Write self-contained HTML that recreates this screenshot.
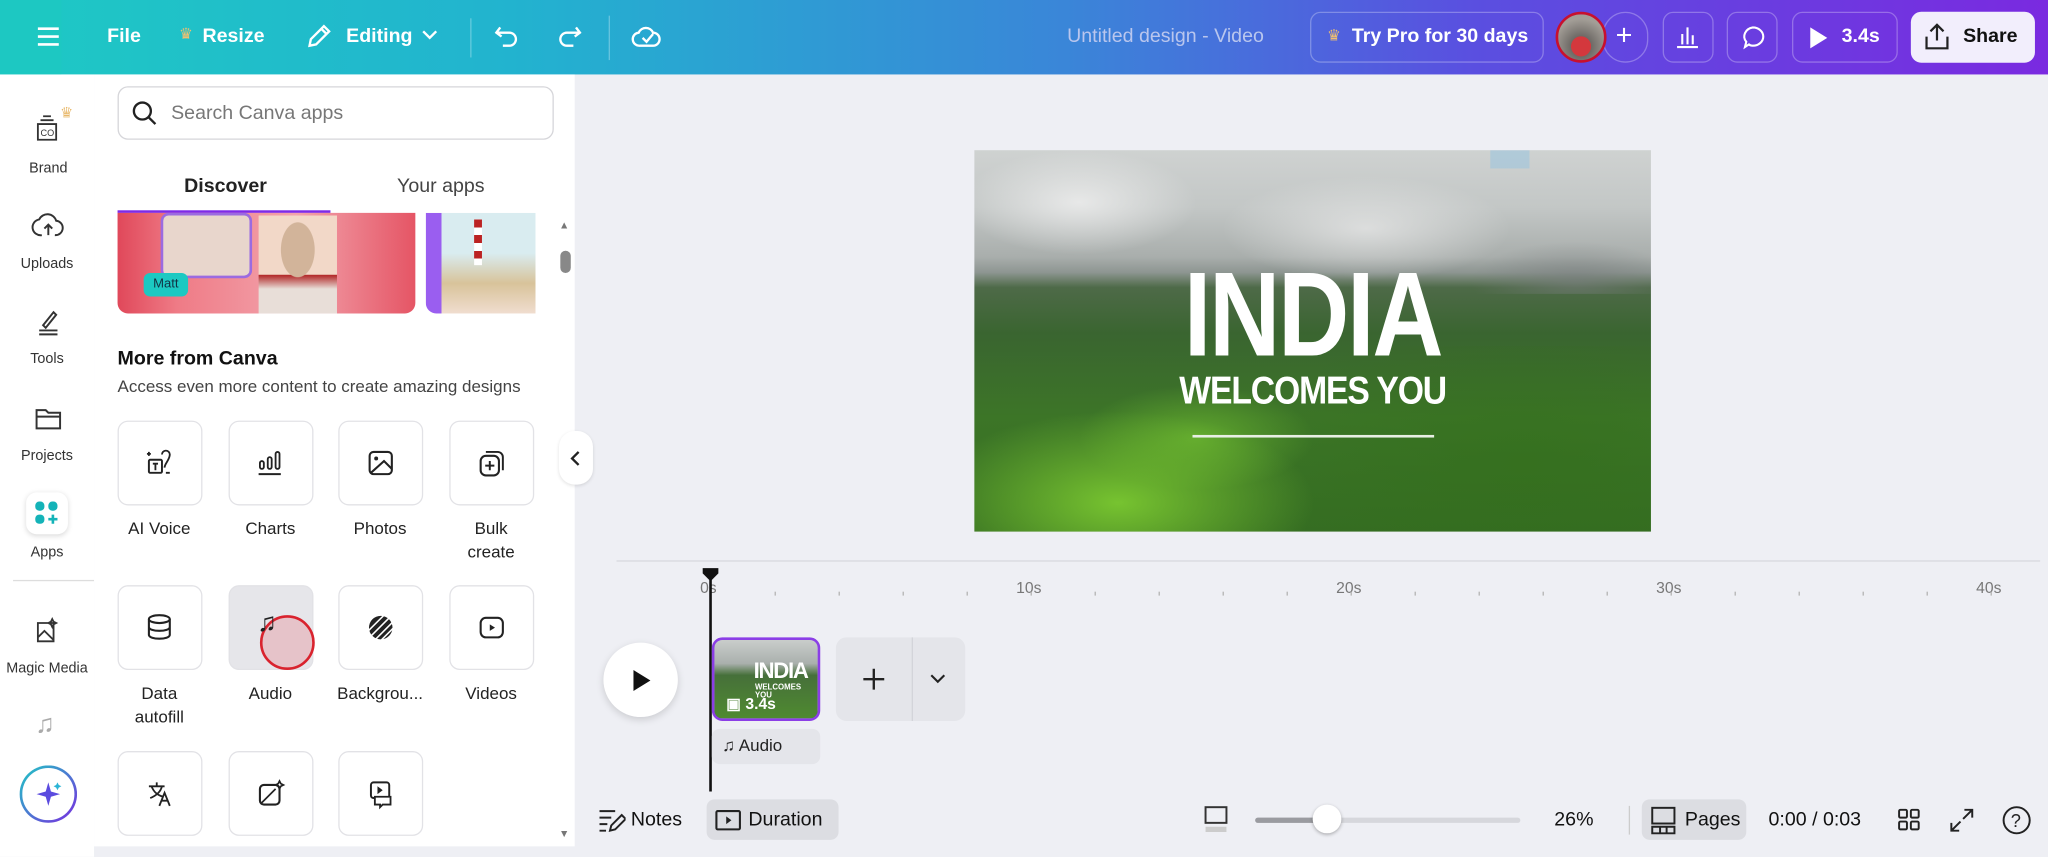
<!DOCTYPE html>
<html><head><meta charset="utf-8">
<style>
*{box-sizing:border-box;margin:0;padding:0}
html,body{width:2048px;height:857px;overflow:hidden;background:#eeeff4;font-family:"Liberation Sans",sans-serif}
#w{position:absolute;left:0;top:0;width:1568px;height:656px;transform:scale(1.306122);transform-origin:0 0;background:#eeeff4}
.a{position:absolute}
.top{left:0;top:0;width:1568px;height:57px;background:linear-gradient(90deg,#1ec9c4 0%,#22b3cf 25%,#3a86d8 52%,#5a4fe0 72%,#7a2ae0 100%)}
.wt{color:#fff;font-weight:bold;font-size:15px}
.btn{border:1px solid rgba(255,255,255,.28);border-radius:8px;height:39px;top:9px}
.rail{left:0;top:57px;width:72px;height:599px;background:#fff}
.rl{width:72px;text-align:center;font-size:11px;color:#333}
.panel{left:72px;top:57px;width:368px;height:591px;background:#fff}
.tile{width:65px;height:65px;border:1px solid #e2e2e6;border-radius:8px;background:#fff}
.tl{width:80px;text-align:center;font-size:13px;color:#222;line-height:18px}
svg{display:block}
.ru{font-size:12px;color:#777;top:443px}
</style></head><body><div id="w">
<div class="a top"></div>
<div class="a" style="left:0;top:0;width:47px;height:57px;background:#1dc8c2"></div>
<svg class="a" style="left:27px;top:19px" width="20" height="18"><path d="M2 3h16M2 9h16M2 15h16" stroke="#fff" stroke-width="2"/></svg>
<div class="a wt" style="left:82px;top:19px">File</div>
<div class="a" style="left:137px;top:19px;color:#f0c070;font-size:12px">♛</div>
<div class="a wt" style="left:155px;top:19px">Resize</div>
<svg class="a" style="left:233px;top:17px" width="22" height="22"><path d="M4 18l1-5L15 3l4 4L9 17z M13 5l4 4" stroke="#fff" stroke-width="1.8" fill="none"/></svg>
<div class="a wt" style="left:265px;top:19px">Editing</div>
<svg class="a" style="left:322px;top:22px" width="14" height="10"><path d="M2 2l5 5 5-5" stroke="#fff" stroke-width="1.8" fill="none"/></svg>
<div class="a" style="left:360px;top:14px;width:1px;height:30px;background:rgba(255,255,255,.3)"></div>
<svg class="a" style="left:377px;top:17px" width="22" height="22"><path d="M6 4L3 8l4 3M3 8h10a5 5 0 010 10H8" stroke="#fff" stroke-width="1.8" fill="none"/></svg>
<svg class="a" style="left:425px;top:17px" width="22" height="22"><path d="M16 4l3 4-4 3M19 8H9a5 5 0 000 10h5" stroke="#fff" stroke-width="1.8" fill="none"/></svg>
<div class="a" style="left:466px;top:12px;width:1px;height:34px;background:rgba(255,255,255,.3)"></div>
<svg class="a" style="left:483px;top:16px" width="24" height="24"><path d="M7 19a5 5 0 01-1-10 6 6 0 0111 0 4 4 0 010 10z M9 13l3 3 5-6" stroke="#fff" stroke-width="1.8" fill="none"/></svg>
<div class="a" style="left:817px;top:19px;color:#b9c6ee;font-size:15px">Untitled design - Video</div>
<div class="a btn" style="left:1003px;width:179px"></div>
<div class="a" style="left:1016px;top:20px;color:#f0c070;font-size:12px">♛</div>
<div class="a wt" style="left:1035px;top:19px">Try Pro for 30 days</div>
<div class="a btn" style="left:1227px;width:35px;border-radius:20px"></div>
<div class="a" style="left:1237px;top:15px;color:#fff;font-size:22px;line-height:24px">+</div>
<div class="a" style="left:1191px;top:9px;width:39px;height:39px;border-radius:50%;border:2px solid #c8102e;background:radial-gradient(circle at 50% 70%,#d4383d 0 25%,#6e6a66 26%,#a39e97 70%)"></div>
<div class="a btn" style="left:1273px;width:39px"></div>
<svg class="a" style="left:1282px;top:18px" width="20" height="20"><path d="M2 18h16M6 16V8M10 16V3M14 16V9" stroke="#fff" stroke-width="1.6"/></svg>
<div class="a btn" style="left:1322px;width:39px"></div>
<svg class="a" style="left:1331px;top:18px" width="22" height="22"><path d="M11 3a8 7 0 110 14c-1 0-2 0-3-1l-3 2 1-4a8 7 0 015-11z" stroke="#fff" stroke-width="1.6" fill="none"/></svg>
<div class="a btn" style="left:1372px;width:81px"></div>
<svg class="a" style="left:1383px;top:19px" width="18" height="20"><path d="M3 2l13 8-13 8z" fill="#fff"/></svg>
<div class="a wt" style="left:1410px;top:19px">3.4s</div>
<div class="a" style="left:1463px;top:9px;width:95px;height:39px;border-radius:8px;background:#f2eefc"></div>
<svg class="a" style="left:1472px;top:17px" width="22" height="22"><path d="M11 14V2M6 7l5-5 5 5M3 11v9h16v-9" stroke="#222" stroke-width="1.7" fill="none"/></svg>
<div class="a" style="left:1503px;top:19px;font-size:15px;font-weight:bold;color:#111">Share</div>

<div class="a rail"></div>
<svg class="a" style="left:24px;top:86px" width="26" height="26"><path d="M5 9h14v12H5z M7 6h10M9 3h6" stroke="#333" stroke-width="1.4" fill="none"/><text x="7" y="18" font-size="7" font-family="Liberation Sans" fill="#333">CO</text></svg>
<div class="a" style="left:46px;top:80px;color:#e8b86a;font-size:11px">♛</div>
<div class="a rl" style="left:1px;top:123px">Brand</div>
<svg class="a" style="left:24px;top:161px" width="26" height="24"><path d="M8 19a6 6 0 01-2-12 7 7 0 0113 1 5 5 0 01-1 11 M13 19v-8M10 14l3-3 3 3" stroke="#333" stroke-width="1.5" fill="none"/></svg>
<div class="a rl" style="top:196px">Uploads</div>
<svg class="a" style="left:25px;top:235px" width="24" height="24"><path d="M8 14L16 4l2 2-8 10z M5 18h14M5 21h14" stroke="#333" stroke-width="1.5" fill="none"/></svg>
<div class="a rl" style="top:269px">Tools</div>
<svg class="a" style="left:26px;top:309px" width="22" height="22"><path d="M2 5h7l2 2h9v12H2z M2 10h18" stroke="#333" stroke-width="1.5" fill="none"/></svg>
<div class="a rl" style="top:343px">Projects</div>
<div class="a" style="left:20px;top:377px;width:32px;height:32px;border-radius:8px;background:#fff;box-shadow:0 1px 4px rgba(0,0,0,.15)"></div>
<svg class="a" style="left:26px;top:383px" width="20" height="20"><rect x="1" y="1" width="7" height="7" rx="3" fill="#14b3b8"/><rect x="11" y="1" width="7" height="7" rx="3" fill="#14b3b8"/><rect x="1" y="11" width="7" height="7" rx="3" fill="#14b3b8"/><path d="M14.5 11v7M11 14.5h7" stroke="#14b3b8" stroke-width="2"/></svg>
<div class="a rl" style="top:417px">Apps</div>
<div class="a" style="left:10px;top:444px;width:75px;height:1px;background:#ddd"></div>
<svg class="a" style="left:26px;top:472px" width="22" height="22"><path d="M3 5h12v14H3z M3 16l5-5 7 7M14 2l1 2 2 1-2 1-1 2-1-2-2-1 2-1z" stroke="#333" stroke-width="1.4" fill="none"/></svg>
<div class="a rl" style="top:506px">Magic Media</div>
<div class="a" style="left:27px;top:544px;font-size:20px;color:#aaa">♫</div>
<div class="a" style="left:15px;top:586px;width:44px;height:44px;border-radius:50%;background:linear-gradient(#fff,#fff) padding-box,linear-gradient(135deg,#1ec9c4,#7a2ae0) border-box;border:2px solid transparent"></div>
<svg class="a" style="left:25px;top:596px" width="24" height="24"><path d="M12 3l2 7 7 2-7 2-2 7-2-7-7-2 7-2z" fill="#5b4bdf"/><path d="M19 3l1 2 2 1-2 1-1 2-1-2-2-1 2-1z" fill="#2bb5d6"/></svg>

<div class="a panel"></div>
<div class="a" style="left:90px;top:66px;width:334px;height:41px;border:1px solid #d6d6da;border-radius:8px"></div>
<svg class="a" style="left:100px;top:76px" width="22" height="22"><circle cx="9" cy="9" r="6.5" stroke="#222" stroke-width="1.8" fill="none"/><path d="M14 14l5 5" stroke="#222" stroke-width="1.8"/></svg>
<div class="a" style="left:131px;top:78px;font-size:15px;color:#777">Search Canva apps</div>
<div class="a" style="left:141px;top:134px;font-size:15px;font-weight:bold;color:#222">Discover</div>
<div class="a" style="left:304px;top:134px;font-size:15px;color:#444">Your apps</div>
<div class="a" style="left:90px;top:161px;width:163px;height:2px;background:#7d2ae8"></div>
<div class="a" style="left:90px;top:163px;width:228px;height:77px;border-radius:0 0 8px 8px;background:linear-gradient(90deg,#e0485a 0,#ef7b86 20%,#f2a3ac 60%,#e55565 100%);overflow:hidden">
 <div class="a" style="left:33px;top:0;width:70px;height:50px;background:#e8d6cc;border:2px solid #9b6be0;border-radius:6px"></div>
 <div class="a" style="left:108px;top:2px;width:60px;height:75px;background:radial-gradient(ellipse at 50% 35%,#d2b49a 0 30%,transparent 31%),linear-gradient(#f2d8c8 60%,#b22a2a 61%,#e8ded8 75%)"></div>
 <div class="a" style="left:20px;top:46px;width:34px;height:18px;background:#1cc9c2;border-radius:5px;font-size:10px;color:#134;text-align:center;line-height:18px">Matt</div>
</div>
<div class="a" style="left:326px;top:163px;width:84px;height:77px;border-radius:0 0 0 8px;background:linear-gradient(90deg,#9a5ef0 0 12px,transparent 12px),linear-gradient(#d9ecf0 40%,#d8c39a 70%,#f0ddcf)"></div>
<div class="a" style="left:363px;top:168px;width:6px;height:35px;background:repeating-linear-gradient(#b22 0 6px,#fff 6px 12px)"></div>
<div class="a" style="left:428px;top:168px;font-size:8px;color:#777">▲</div>
<div class="a" style="left:429px;top:192px;width:8px;height:17px;border-radius:4px;background:#888"></div>
<div class="a" style="left:428px;top:634px;font-size:8px;color:#777">▼</div>
<div class="a" style="left:90px;top:266px;font-size:15px;font-weight:bold;color:#111">More from Canva</div>
<div class="a" style="left:90px;top:288px;font-size:13px;color:#444">Access even more content to create amazing designs</div>

<div class="a tile" style="left:90px;top:322px"></div>
<div class="a tile" style="left:175px;top:322px"></div>
<div class="a tile" style="left:259px;top:322px"></div>
<div class="a tile" style="left:344px;top:322px"></div>
<svg class="a" style="left:111px;top:343px" width="24" height="24"><rect x="3" y="9" width="10" height="10" rx="1" stroke="#222" stroke-width="1.5" fill="none"/><path d="M6 12h4M8 12v5M13 5a3 3 0 016 0c0 4-4 7-4 10M16 19h3M3 3v3M1.5 4.5h3" stroke="#222" stroke-width="1.4" fill="none"/></svg>
<svg class="a" style="left:196px;top:343px" width="24" height="24"><rect x="3" y="10" width="3" height="6" rx="1.5" stroke="#222" stroke-width="1.4" fill="none"/><rect x="9" y="7" width="3" height="9" rx="1.5" stroke="#222" stroke-width="1.4" fill="none"/><rect x="15" y="3" width="3" height="13" rx="1.5" stroke="#222" stroke-width="1.4" fill="none"/><path d="M2 20h17" stroke="#222" stroke-width="1.6"/></svg>
<svg class="a" style="left:280px;top:343px" width="24" height="24"><rect x="3" y="3" width="17" height="17" rx="3" stroke="#222" stroke-width="1.6" fill="none"/><circle cx="8" cy="8" r="1.5" fill="#222"/><path d="M4 19l10-9 6 6" stroke="#222" stroke-width="1.6" fill="none"/></svg>
<svg class="a" style="left:365px;top:343px" width="24" height="24"><rect x="3" y="6" width="14" height="15" rx="4" stroke="#222" stroke-width="1.6" fill="none"/><path d="M7 3h9a4 4 0 014 4v10M10 10v7M6.5 13.5h7" stroke="#222" stroke-width="1.5" fill="none"/></svg>
<div class="a tl" style="left:82px;top:396px">AI Voice</div>
<div class="a tl" style="left:167px;top:396px">Charts</div>
<div class="a tl" style="left:251px;top:396px">Photos</div>
<div class="a tl" style="left:336px;top:396px">Bulk<br>create</div>
<div class="a tile" style="left:90px;top:448px"></div>
<div class="a tile" style="left:175px;top:448px;background:#e6e6ea"></div>
<div class="a tile" style="left:259px;top:448px"></div>
<div class="a tile" style="left:344px;top:448px"></div>
<svg class="a" style="left:111px;top:469px" width="24" height="24"><ellipse cx="11" cy="5" rx="8" ry="3" stroke="#222" stroke-width="1.6" fill="none"/><path d="M3 5v12c0 2 4 3 8 3s8-1 8-3V5M3 11c0 2 4 3 8 3s8-1 8-3" stroke="#222" stroke-width="1.6" fill="none"/></svg>
<div class="a" style="left:199px;top:471px;width:42px;height:42px;border-radius:50%;border:2px solid #d9232e;background:rgba(230,130,140,.35)"></div>
<div class="a" style="left:197px;top:466px;font-size:20px;color:#222">♫</div>
<svg class="a" style="left:280px;top:469px" width="24" height="24"><circle cx="11.5" cy="11.5" r="9" fill="#222"/><path d="M2 14L14 2M4 18L18 4M7 21L21 7M11 22l11-11" stroke="#fff" stroke-width="1.2"/></svg>
<svg class="a" style="left:365px;top:469px" width="24" height="24"><rect x="3" y="4" width="17" height="15" rx="4" stroke="#222" stroke-width="1.6" fill="none"/><path d="M10 9l4 2.5-4 2.5z" fill="#222"/></svg>
<div class="a tl" style="left:82px;top:522px">Data<br>autofill</div>
<div class="a tl" style="left:167px;top:522px">Audio</div>
<div class="a tl" style="left:251px;top:522px">Backgrou...</div>
<div class="a tl" style="left:336px;top:522px">Videos</div>
<div class="a tile" style="left:90px;top:575px"></div>
<div class="a tile" style="left:175px;top:575px"></div>
<div class="a tile" style="left:259px;top:575px"></div>
<svg class="a" style="left:111px;top:596px" width="24" height="24"><path d="M3 6h12M9 3v3M5 6c2 5 5 7 9 8M13 6c-1 4-4 7-9 9M11 21l4-10 4 10M12.5 17h5" stroke="#222" stroke-width="1.4" fill="none"/></svg>
<svg class="a" style="left:196px;top:596px" width="24" height="24"><rect x="3" y="5" width="15" height="15" rx="3" stroke="#222" stroke-width="1.6" fill="none"/><path d="M4 19l11-11M18 2l1 2 2 1-2 1-1 2-1-2-2-1 2-1z" stroke="#222" stroke-width="1.3" fill="none"/></svg>
<svg class="a" style="left:280px;top:596px" width="24" height="24"><rect x="4" y="3" width="14" height="12" rx="2" stroke="#222" stroke-width="1.5" fill="none"/><path d="M9 6l4 3-4 3z" fill="#222"/><path d="M7 14h12v6h-6l-2 2v-2H7z" stroke="#222" stroke-width="1.4" fill="#fff"/></svg>

<div class="a" style="left:428px;top:330px;width:26px;height:41px;border-radius:12px;background:#fff;box-shadow:0 1px 3px rgba(0,0,0,.12)"></div>
<svg class="a" style="left:435px;top:344px" width="12" height="14"><path d="M8 2L3 7l5 5" stroke="#222" stroke-width="1.8" fill="none"/></svg>

<!-- design -->
<div class="a" style="left:746px;top:115px;width:518px;height:292px;overflow:hidden;background:linear-gradient(180deg,#cfd2d1 0%,#c3c7c6 15%,#a9aeac 28%,#8e9692 32%,#4e6a48 36%,#3a6530 48%,#3c7527 70%,#356d22 100%)">
 <div class="a" style="left:0;top:0;width:518px;height:110px;background:radial-gradient(ellipse 90px 40px at 80px 40px,rgba(240,240,240,.8),transparent),radial-gradient(ellipse 110px 40px at 300px 60px,rgba(235,235,235,.7),transparent),radial-gradient(ellipse 80px 30px at 460px 100px,rgba(120,125,125,.6),transparent)"></div>
 <div class="a" style="left:395px;top:0;width:30px;height:14px;background:#9cc4de;opacity:.6"></div>
 <div class="a" style="left:0;top:150px;width:518px;height:142px;background:radial-gradient(ellipse 150px 70px at 110px 120px,rgba(130,210,50,.85),transparent),radial-gradient(ellipse 90px 40px at 170px 70px,rgba(120,200,50,.6),transparent),radial-gradient(ellipse 200px 120px at 420px 90px,rgba(50,110,25,.5),transparent)"></div>
 <div class="a" style="left:0;top:80px;width:518px;text-align:center;font-size:92px;font-weight:bold;color:#fff;letter-spacing:-2px;line-height:92px;transform:scaleX(.82)">INDIA</div>
 <div class="a" style="left:0;top:168px;width:518px;text-align:center;font-size:30px;font-weight:bold;color:#fff;letter-spacing:-1px;transform:scaleX(.86)">WELCOMES YOU</div>
 <div class="a" style="left:167px;top:218px;width:185px;height:2px;background:#e8efe4"></div>
</div>

<div class="a" style="left:472px;top:429px;width:1090px;height:1px;background:#d8d9de"></div>
<div class="a ru" style="left:536px">0s</div>
<div class="a ru" style="left:778px">10s</div>
<div class="a ru" style="left:1023px">20s</div>
<div class="a ru" style="left:1268px">30s</div>
<div class="a ru" style="left:1513px">40s</div>
<div class="a" style="left:593px;top:453px;width:960px;height:3px;background:repeating-linear-gradient(90deg,#bbb 0 1px,transparent 1px 49px)"></div>
<svg class="a" style="left:537px;top:434px" width="14" height="12"><path d="M1 1h12v4l-6 6-6-6z" fill="#111"/></svg>
<div class="a" style="left:543px;top:444px;width:2px;height:162px;background:#111"></div>
<div class="a" style="left:462px;top:492px;width:57px;height:57px;border-radius:50%;background:#fff;box-shadow:0 2px 6px rgba(0,0,0,.15)"></div>
<svg class="a" style="left:482px;top:511px" width="18" height="20"><path d="M3 2l13 8-13 8z" fill="#111"/></svg>
<div class="a" style="left:545px;top:488px;width:83px;height:64px;border:2px solid #8b3ee6;border-radius:8px;overflow:hidden;background:linear-gradient(#c9cdcb 0,#aab0ad 30%,#46703a 45%,#4f8a30 100%)">
 <div class="a" style="left:30px;top:14px;font-size:17px;font-weight:bold;color:#fff;letter-spacing:-1px">INDIA</div>
 <div class="a" style="left:31px;top:34px;font-size:6px;font-weight:bold;color:#fff">WELCOMES YOU</div>
 <div class="a" style="left:9px;top:42px;font-size:12px;font-weight:bold;color:#fff">▣ 3.4s</div>
</div>
<div class="a" style="left:640px;top:488px;width:99px;height:64px;border-radius:8px;background:#e4e5ea"></div>
<div class="a" style="left:698px;top:488px;width:1px;height:64px;background:#d3d4d9"></div>
<svg class="a" style="left:659px;top:510px" width="20" height="20"><path d="M10 2v16M2 10h16" stroke="#222" stroke-width="1.8"/></svg>
<svg class="a" style="left:711px;top:515px" width="14" height="10"><path d="M2 2l5 5 5-5" stroke="#222" stroke-width="1.6" fill="none"/></svg>
<div class="a" style="left:545px;top:558px;width:83px;height:27px;border-radius:6px;background:#e4e5ea"></div>
<div class="a" style="left:553px;top:563px;font-size:13px;color:#222">♫ Audio</div>

<svg class="a" style="left:457px;top:618px" width="22" height="20"><path d="M2 3h12M2 8h9M2 13h6M2 18h5M10 18l1-4 8-8 3 3-8 8z" stroke="#222" stroke-width="1.5" fill="none"/></svg>
<div class="a" style="left:483px;top:619px;font-size:15px;color:#111">Notes</div>
<div class="a" style="left:541px;top:612px;width:101px;height:31px;border-radius:6px;background:#dcdde2"></div>
<svg class="a" style="left:547px;top:619px" width="22" height="18"><rect x="1.5" y="2" width="18" height="14" rx="1" stroke="#222" stroke-width="1.6" fill="none"/><path d="M9 6l4 3-4 3z" fill="#222"/></svg>
<div class="a" style="left:573px;top:619px;font-size:15px;color:#111">Duration</div>
<svg class="a" style="left:920px;top:616px" width="22" height="24"><rect x="3" y="2" width="16" height="12" stroke="#333" stroke-width="1.5" fill="none"/><path d="M3 17h16v4H3z" fill="#ccc"/></svg>
<div class="a" style="left:961px;top:626px;width:203px;height:4px;border-radius:2px;background:#d6d7dc"></div>
<div class="a" style="left:961px;top:626px;width:56px;height:4px;border-radius:2px;background:#9a9ba0"></div>
<div class="a" style="left:1005px;top:616px;width:22px;height:22px;border-radius:50%;background:#fff;box-shadow:0 1px 3px rgba(0,0,0,.3)"></div>
<div class="a" style="left:1190px;top:619px;font-size:15px;color:#111">26%</div>
<div class="a" style="left:1247px;top:617px;width:1px;height:22px;background:#ccc"></div>
<div class="a" style="left:1257px;top:612px;width:80px;height:31px;border-radius:6px;background:#dcdde2"></div>
<svg class="a" style="left:1263px;top:617px" width="22" height="22"><rect x="2" y="1.5" width="17" height="12" stroke="#222" stroke-width="1.5" fill="none"/><path d="M2 16h17v5H2z M8 16v5M13 16v5" stroke="#222" stroke-width="1.5" fill="none"/></svg>
<div class="a" style="left:1290px;top:619px;font-size:15px;color:#111">Pages</div>
<div class="a" style="left:1354px;top:619px;font-size:15px;color:#111">0:00 / 0:03</div>
<svg class="a" style="left:1452px;top:618px" width="20" height="20"><rect x="2" y="2" width="6" height="6" rx="1" stroke="#222" stroke-width="1.5" fill="none"/><rect x="11" y="2" width="6" height="6" rx="1" stroke="#222" stroke-width="1.5" fill="none"/><rect x="2" y="11" width="6" height="6" rx="1" stroke="#222" stroke-width="1.5" fill="none"/><rect x="11" y="11" width="6" height="6" rx="1" stroke="#222" stroke-width="1.5" fill="none"/></svg>
<svg class="a" style="left:1492px;top:618px" width="20" height="20"><path d="M12 2h6v6M18 2l-7 7M8 18H2v-6M2 18l7-7" stroke="#222" stroke-width="1.5" fill="none"/></svg>
<svg class="a" style="left:1532px;top:616px" width="24" height="24"><circle cx="12" cy="12" r="10" stroke="#222" stroke-width="1.5" fill="none"/><text x="7.5" y="17" font-size="14" font-family="Liberation Sans" fill="#222">?</text></svg>
</div></body></html>
